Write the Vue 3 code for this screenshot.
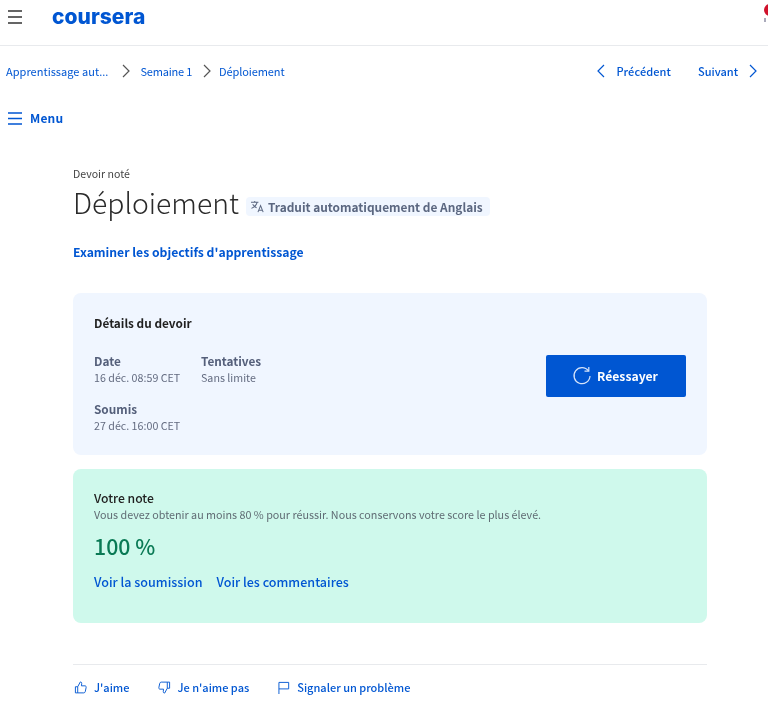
<script setup>
const crumbs = ['Semaine 1', 'Déploiement']
</script>

<template>
  <div class="page">
    <header class="top">
      <svg class="burger" width="16" height="14" viewBox="0 0 16 14" fill="none" stroke="#333" stroke-width="1.5">
        <path d="M1 1h14M1 7h14M1 13h14" />
      </svg>
      <span class="logo">coursera</span>
      <div class="avatar"><span class="dot"></span><span class="tiny"></span></div>
    </header>

    <nav class="crumbs">
      <div class="trail">
        <a class="crumb first">Apprentissage aut...</a>
        <template v-for="c in crumbs" :key="c">
          <svg class="sep" width="8" height="14" viewBox="0 0 8 14" fill="none" stroke="#555" stroke-width="1.2">
            <path d="M1 1l6 6-6 6" />
          </svg>
          <a class="crumb">{{ c }}</a>
        </template>
      </div>
      <div class="pager">
        <a class="pg prev">
          <svg width="8" height="14" viewBox="0 0 8 14" fill="none" stroke="#0056d2" stroke-width="1.2"><path d="M7 1L1 7l6 6" /></svg>
          Précédent
        </a>
        <a class="pg next">
          Suivant
          <svg width="8" height="14" viewBox="0 0 8 14" fill="none" stroke="#0056d2" stroke-width="1.2"><path d="M1 1l6 6-6 6" /></svg>
        </a>
      </div>
    </nav>

    <div class="menu">
      <svg width="14" height="13" viewBox="0 0 14 13" fill="none" stroke="#0056d2" stroke-width="1.4"><path d="M0 1h14M0 6.500h14M0 12h14" /></svg>
      <span>Menu</span>
    </div>

    <main class="content">
      <div class="kicker">Devoir noté</div>
      <div class="title-row">
        <h1>Déploiement</h1>
        <span class="badge">
          <svg width="15" height="13" viewBox="0 0 16 14" fill="none" stroke="#5b6780" stroke-width="1.100">
            <path d="M1 2.500h8M5 1v1.500M7.500 2.500C7 5.500 4.500 7.500 1.500 9M2.800 4.500C3.800 6.300 5.300 7.600 7 8.300" />
            <path d="M8.500 13l2.800-7 2.800 7M9.500 11h3.600" />
          </svg>
          Traduit automatiquement de Anglais
        </span>
      </div>
      <a class="objectives">Examiner les objectifs d'apprentissage</a>

      <section class="card details">
        <div class="info">
          <h2>Détails du devoir</h2>
          <div class="meta-row">
            <div class="meta date">
              <b>Date</b>
              <span>16 déc. 08:59 CET</span>
            </div>
            <div class="meta">
              <b>Tentatives</b>
              <span>Sans limite</span>
            </div>
          </div>
          <div class="meta">
            <b>Soumis</b>
            <span>27 déc. 16:00 CET</span>
          </div>
        </div>
        <button class="retry" type="button">
          <svg width="20" height="20" viewBox="0 0 20 20" fill="none" stroke="#d6e4fa" stroke-width="1.200">
            <path d="M16.500 5A8 8 0 1 0 18 10" />
            <path d="M12.500 5.200h4.300V1" />
          </svg>
          Réessayer
        </button>
      </section>

      <section class="card grade">
        <h2>Votre note</h2>
        <p>Vous devez obtenir au moins 80 % pour réussir. Nous conservons votre score le plus élevé.</p>
        <div class="score">100 %</div>
        <div class="links">
          <a>Voir la soumission</a>
          <a>Voir les commentaires</a>
        </div>
      </section>

      <footer class="actions">
        <a class="like">
          <svg width="13" height="13" viewBox="0 0 14 14" fill="none" stroke="#0056d2" stroke-width="1">
            <path d="M4 6.200L6.800 1c1.200 0 1.700.8 1.500 1.800L8 5.200h3.800c.9 0 1.500.8 1.300 1.600l-1 4.700c-.2.800-.8 1.300-1.600 1.300H4M4 6.200H1.500v6.600H4z" />
          </svg>
          J'aime
        </a>
        <a>
          <svg width="13" height="13" viewBox="0 0 14 14" fill="none" stroke="#0056d2" stroke-width="1">
            <path d="M10 7.800L7.200 13c-1.200 0-1.700-.8-1.500-1.800L6 8.800H2.200c-.9 0-1.500-.8-1.300-1.600l1-4.700c.2-.8.8-1.300 1.600-1.300H10M10 7.800h2.500V1.200H10z" />
          </svg>
          Je n'aime pas
        </a>
        <a>
          <svg width="13" height="13" viewBox="0 0 14 14" fill="none" stroke="#0056d2" stroke-width="1">
            <path d="M1 14V1.500h10.500v7H1" />
          </svg>
          Signaler un problème
        </a>
      </footer>
    </main>
  </div>
</template>

<style>
html, body { margin: 0; background: #fff; }
</style>

<style scoped>
.page {
  width: 768px;
  height: 716px;
  overflow: hidden;
  font-family: "Noto Sans CJK SC", "Noto Sans", sans-serif;
  color: #1f1f1f;
  background: #fff;
  filter: blur(0.5px);
}
a { color: #0056d2; text-decoration: none; }
h1, h2, p { margin: 0; font-weight: 400; }

.top {
  border-bottom: 1px solid #e8eaed;
  display: flex;
  align-items: center;
  padding: 0 0 11px 7px;
  height: 34px;
}
.burger { flex: none; }
.logo {
  margin-left: 29px;
  font-family: Inter, sans-serif;
  font-weight: 800;
  font-size: 21px;
  letter-spacing: 0.03px;
  line-height: 22px;
  color: #0056d2;
}
.avatar {
  margin-left: auto;
  width: 4px;
  height: 24px;
  margin-top: 4px;
  overflow: hidden;
  align-self: flex-start;
}
.dot {
  display: block;
  width: 12px;
  height: 12px;
  border-radius: 50%;
  background: #d0112b;
}
.tiny { display: block; width: 2px; height: 4px; margin-top: 2px; background: #aab; }

.crumbs {
  height: 50px;
  padding: 0 11px 0 6px;
  display: flex;
  align-items: center;
  justify-content: space-between;
}
.trail { display: flex; align-items: center; font-size: 11px; }
.crumb { color: #0056d2; }
.first { letter-spacing: 0.03px; }
.crumb:not(.first) { letter-spacing: -0.2px; }
.crumb:last-child { letter-spacing: -0.1px; }
.sep { margin: 0 10px 0 14px; }
.sep:nth-of-type(2) { margin: 0 8px 0 11px; }
.pager { display: flex; gap: 27px; font-size: 11px; font-weight: 500; }
.pg { display: flex; align-items: center; }
.prev { letter-spacing: 0.1px; }
.prev svg { margin-right: 11px; }
.next svg { margin-left: 11px; }

.menu {
  display: flex;
  align-items: center;
  gap: 8px;
  padding: 7px 0 0 8px;
  font-size: 12px;
  font-weight: 700;
  letter-spacing: 0.2px;
  color: #0056d2;
  line-height: 30px;
}

.content { margin: 0 61px 0 73px; padding-top: 34px; }
.kicker { font-size: 10.600px; line-height: 14px; color: #444; }
.title-row { display: flex; align-items: center; margin-top: 1px; height: 40px; }
h1 { font-size: 28.350px; font-weight: 300; line-height: 40px; color: #2a2a2a; }
.badge {
  margin-left: 7px;
  margin-top: 9px;
  display: flex;
  align-items: center;
  gap: 3px;
  height: 19px;
  padding: 0 7px 0 4px;
  border-radius: 4px;
  background: #f0f6ff;
  color: #5b6780;
  font-size: 11.900px;
  font-weight: 700;
}
.objectives {
  display: block;
  margin-top: 20px;
  font-size: 12.200px;
  font-weight: 700;
  line-height: 20px;
}

.card { border-radius: 8px; box-sizing: border-box; }
.details {
  margin-top: 31px;
  height: 162px;
  background: #f0f6ff;
  padding: 21px 21px 0;
  display: flex;
  justify-content: space-between;
}
.details h2 { font-size: 11.800px; font-weight: 700; line-height: 18px; color: #1f1f1f; }
.meta-row { display: flex; margin-top: 20px; margin-bottom: 14px; }
.date { width: 107px; }
.meta { display: flex; flex-direction: column; font-size: 10.700px; line-height: 16px; color: #636b80; }
.meta b { font-size: 11.800px; font-weight: 700; line-height: 18px; color: #545f7a; }
.retry {
  align-self: flex-start;
  margin-top: 41px;
  width: 140px;
  height: 42px;
  padding: 0 2px 0 0;
  border: 0;
  border-radius: 2px;
  background: #0056d2;
  color: #fff;
  font: inherit;
  font-size: 12.200px;
  font-weight: 700;
  display: flex;
  align-items: center;
  justify-content: center;
  gap: 5px;
}

.grade {
  margin-top: 14px;
  height: 154px;
  background: #cff9ec;
  padding: 21px 21px 0;
}
.grade h2 { font-size: 12.200px; font-weight: 500; line-height: 17px; color: #1f1f1f; }
.grade p { font-size: 10.750px; line-height: 16px; color: #5f6b73; }
.score { margin-top: 8px; font-size: 21.300px; font-weight: 500; line-height: 30px; color: #0a7a55; }
.links { display: flex; gap: 14px; margin-top: 11px; font-size: 12.550px; font-weight: 500; line-height: 20px; }

.actions {
  margin-top: 41px;
  border-top: 1px solid #e8eaed;
  padding-top: 14px;
  display: flex;
  gap: 29px;
  font-size: 11px;
  font-weight: 500;
}
.actions a { display: flex; align-items: center; gap: 6px; }
.actions a.like { padding-left: 1px; gap: 7px; }
</style>
